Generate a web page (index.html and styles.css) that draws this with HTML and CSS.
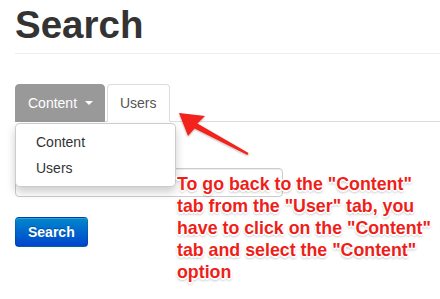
FILE: index.html
```html
<!DOCTYPE html>
<html>
<head>
<meta charset="utf-8">
<link rel="stylesheet" href="styles.css">
</head>
<body>
<div class="page">
  <h1 class="page-header">Search</h1>
  <ul class="nav-tabs">
    <li class="tab open">
      <a class="tab-link toggle">Content <span class="caret"></span></a>
      <ul class="dropdown-menu">
        <li><a>Content</a></li>
        <li><a>Users</a></li>
      </ul>
    </li>
    <li class="tab"><a class="tab-link active">Users</a></li>
  </ul>
  <div class="field"><input class="search-input" type="text"></div>
  <button class="btn-primary">Search</button>
</div>
<svg class="arrow" width="440" height="299" viewBox="0 0 440 299">
  <defs>
    <filter id="sh" x="-20%" y="-20%" width="140%" height="140%">
      <feDropShadow dx="0" dy="1" stdDeviation="1" flood-color="#000" flood-opacity="0.3"/>
    </filter>
  </defs>
  <polygon filter="url(#sh)" fill="#f2201b" points="179,113 205,116 197.4,123.4 248.5,153.1 247.5,154.9 194.6,128.6 188,136"/>
</svg>
<div class="note">To go back to the "Content"<br>tab from the "User" tab, you<br>have to click on the "Content"<br>tab and select the "Content"<br>option</div>
</body>
</html>
```
FILE: styles.css
```css
html, body {
  margin: 0;
  background: #fff;
  font-family: "Liberation Sans", Arial, sans-serif;
  color: #333;
}
.page {
  padding: 5px 0 0 15px;
}
.page-header {
  margin: 0;
  font-size: 38.5px;
  line-height: 40px;
  font-weight: bold;
  color: #333;
  padding-bottom: 8px;
  border-bottom: 1px solid #eee;
}
.nav-tabs {
  list-style: none;
  margin: 30px 0 0 0;
  padding: 0;
  display: flex;
  border-bottom: 1px solid #ddd;
}
.tab {
  position: relative;
  margin-bottom: -1px;
  margin-right: 2px;
}
.tab-link {
  display: block;
  padding: 8px 12px;
  line-height: 20px;
  font-size: 14px;
  border: 1px solid transparent;
  border-radius: 4px 4px 0 0;
  color: #555;
}
.toggle {
  background: #999;
  border-color: #999;
  color: #fff;
  padding-right: 11px;
}
.caret {
  display: inline-block;
  width: 0;
  height: 0;
  margin-left: 4px;
  vertical-align: middle;
  border-top: 4px solid #fff;
  border-left: 4px solid transparent;
  border-right: 4px solid transparent;
  position: relative;
  top: -1px;
}
.active {
  background: #fff;
  border-color: #ddd #ddd transparent;
  color: #555;
}
.dropdown-menu {
  position: absolute;
  top: 100%;
  left: 0;
  z-index: 10;
  margin: 1px 0 0 0;
  padding: 5px 0;
  list-style: none;
  width: 159px;
  background: #fff;
  border: 1px solid rgba(0,0,0,0.2);
  border-radius: 5px;
  box-shadow: 0 5px 10px rgba(0,0,0,0.2);
}
.dropdown-menu a {
  display: block;
  padding: 3px 20px;
  line-height: 20px;
  font-size: 14px;
  color: #333;
}
.field {
  margin-top: 46px;
}
.search-input {
  display: block;
  box-sizing: border-box;
  width: 268px;
  height: 29px;
  margin: 0;
  padding: 4px 6px;
  border: 1px solid #ccc;
  border-radius: 4px;
  box-shadow: inset 0 1px 1px rgba(0,0,0,0.075);
  font-family: inherit;
  font-size: 14px;
}
.btn-primary {
  display: block;
  margin-top: 20px;
  box-sizing: border-box;
  height: 30px;
  padding: 4px 12px;
  line-height: 20px;
  font-family: inherit;
  font-size: 14px;
  font-weight: bold;
  color: #fff;
  text-shadow: 0 -1px 0 rgba(0,0,0,0.25);
  background: linear-gradient(to bottom, #0088cc, #0044cc);
  border: 1px solid;
  border-color: rgba(0,0,0,0.1) rgba(0,0,0,0.1) rgba(0,0,0,0.25);
  border-radius: 4px;
  box-shadow: inset 0 1px 0 rgba(255,255,255,0.2), 0 1px 2px rgba(0,0,0,0.05);
}
.arrow {
  position: absolute;
  left: 0;
  top: 0;
  pointer-events: none;
  z-index: 20;
}
.note {
  position: absolute;
  left: 177px;
  top: 173px;
  z-index: 30;
  font-size: 17.8px;
  line-height: 22px;
  font-weight: bold;
  color: #ee1f1a;
  white-space: nowrap;
  text-shadow: -1px -1px 0 #fff, 1px -1px 0 #fff, -1px 1px 0 #fff, 1px 1px 0 #fff,
    0 -1.5px 0 #fff, 0 1.5px 0 #fff, -1.5px 0 0 #fff, 1.5px 0 0 #fff,
    0 2px 3px rgba(0,0,0,0.45);
}
```
